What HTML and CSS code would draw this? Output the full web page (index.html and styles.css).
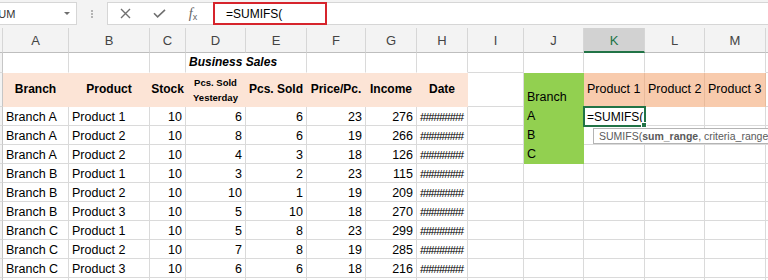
FILE: index.html
```html
<!DOCTYPE html>
<html>

<head>
    <meta charset="UTF-8">
    <meta name="viewport" content="width=device-width, initial-scale=1.0">
    <title>Business Sales - SUMIFS</title>
    <link rel="stylesheet" href="styles.css">
</head>

<body>
    <div class="toolbar">
        <div class="namebox">
            <span>SUM</span>
            <span class="namebox__arrow"></span>
        </div>
        <div class="toolbar__grip"></div>
        <div class="formula">
            <span class="formula__icon">
                <svg width="11" height="11" viewBox="0 0 11 11">
                    <path d="M1 1 L10 10 M10 1 L1 10" stroke="#707070" stroke-width="1.4" fill="none" />
                </svg>
            </span>
            <span class="formula__icon">
                <svg width="13" height="9" viewBox="0 0 13 9">
                    <path d="M1 4.2 L4.6 7.8 L12 0.8" stroke="#707070" stroke-width="1.6" fill="none" />
                </svg>
            </span>
            <span class="formula__icon formula__icon--fx"><i>f</i><span class="formula__x">x</span></span>
            <div class="formula__input">=SUMIFS(</div>
        </div>
    </div>

    <table class="sheet">
        <colgroup>
            <col class="w-rh">
            <col class="w-66">
            <col class="w-81">
            <col class="w-36">
            <col class="w-60">
            <col class="w-61">
            <col class="w-59">
            <col class="w-51">
            <col class="w-51">
            <col class="w-56">
            <col class="w-60">
            <col class="w-61">
            <col class="w-60">
            <col class="w-61">
            <col class="w-40">
        </colgroup>
        <tr class="letters">
            <th class="rh"></th>
            <th>A</th>
            <th>B</th>
            <th>C</th>
            <th>D</th>
            <th>E</th>
            <th>F</th>
            <th>G</th>
            <th>H</th>
            <th>I</th>
            <th>J</th>
            <th class="letters__active">K</th>
            <th>L</th>
            <th>M</th>
            <th></th>
        </tr>
        <tr class="row-title">
            <td class="rh"></td>
            <td class="above-fill"></td>
            <td class="above-fill"></td>
            <td class="above-fill"></td>
            <td class="above-fill cell--title">Business Sales</td>
            <td class="above-fill"></td>
            <td class="above-fill"></td>
            <td class="above-fill"></td>
            <td class="above-fill"></td>
            <td></td>
            <td class="above-fill"></td>
            <td class="above-fill"></td>
            <td class="above-fill"></td>
            <td class="above-fill"></td>
            <td></td>
        </tr>
        <tr class="row-head">
            <td class="rh"></td>
            <td class="cell--head">Branch</td>
            <td class="cell--head">Product</td>
            <td class="cell--head">Stock</td>
            <td class="cell--head cell--small">Pcs. Sold<br>Yesterday</td>
            <td class="cell--head">Pcs. Sold</td>
            <td class="cell--head">Price/Pc.</td>
            <td class="cell--head">Income</td>
            <td class="cell--head">Date</td>
            <td></td>
            <td class="cell--green">Branch</td>
            <td class="cell--orange">Product 1</td>
            <td class="cell--orange">Product 2</td>
            <td class="cell--orange">Product 3</td>
            <td></td>
        </tr>
        <tr>
            <td class="rh"></td>
            <td>Branch A</td>
            <td>Product 1</td>
            <td class="num">10</td>
            <td class="num">6</td>
            <td class="num">6</td>
            <td class="num">23</td>
            <td class="num">276</td>
            <td class="hash">########</td>
            <td></td>
            <td class="cell--green">A</td>
            <td class="cell--active">=SUMIFS(<span class="caret"></span>
                <span class="handle"></span>
                <div class="tip">SUMIFS(<b>sum_range</b>, criteria_range1, criteria1, ...)</div>
            </td>
            <td></td>
            <td></td>
            <td></td>
        </tr>
        <tr>
            <td class="rh"></td>
            <td>Branch A</td>
            <td>Product 2</td>
            <td class="num">10</td>
            <td class="num">8</td>
            <td class="num">6</td>
            <td class="num">19</td>
            <td class="num">266</td>
            <td class="hash">########</td>
            <td></td>
            <td class="cell--green">B</td>
            <td></td>
            <td></td>
            <td></td>
            <td></td>
        </tr>
        <tr>
            <td class="rh"></td>
            <td>Branch A</td>
            <td>Product 2</td>
            <td class="num">10</td>
            <td class="num">4</td>
            <td class="num">3</td>
            <td class="num">18</td>
            <td class="num">126</td>
            <td class="hash">########</td>
            <td></td>
            <td class="cell--green">C</td>
            <td></td>
            <td></td>
            <td></td>
            <td></td>
        </tr>
        <tr>
            <td class="rh"></td>
            <td>Branch B</td>
            <td>Product 1</td>
            <td class="num">10</td>
            <td class="num">3</td>
            <td class="num">2</td>
            <td class="num">23</td>
            <td class="num">115</td>
            <td class="hash">########</td>
            <td></td>
            <td></td>
            <td></td>
            <td></td>
            <td></td>
            <td></td>
        </tr>
        <tr>
            <td class="rh"></td>
            <td>Branch B</td>
            <td>Product 2</td>
            <td class="num">10</td>
            <td class="num">10</td>
            <td class="num">1</td>
            <td class="num">19</td>
            <td class="num">209</td>
            <td class="hash">########</td>
            <td></td>
            <td></td>
            <td></td>
            <td></td>
            <td></td>
            <td></td>
        </tr>
        <tr>
            <td class="rh"></td>
            <td>Branch B</td>
            <td>Product 3</td>
            <td class="num">10</td>
            <td class="num">5</td>
            <td class="num">10</td>
            <td class="num">18</td>
            <td class="num">270</td>
            <td class="hash">########</td>
            <td></td>
            <td></td>
            <td></td>
            <td></td>
            <td></td>
            <td></td>
        </tr>
        <tr>
            <td class="rh"></td>
            <td>Branch C</td>
            <td>Product 1</td>
            <td class="num">10</td>
            <td class="num">5</td>
            <td class="num">8</td>
            <td class="num">23</td>
            <td class="num">299</td>
            <td class="hash">########</td>
            <td></td>
            <td></td>
            <td></td>
            <td></td>
            <td></td>
            <td></td>
        </tr>
        <tr>
            <td class="rh"></td>
            <td>Branch C</td>
            <td>Product 2</td>
            <td class="num">10</td>
            <td class="num">7</td>
            <td class="num">8</td>
            <td class="num">19</td>
            <td class="num">285</td>
            <td class="hash">########</td>
            <td></td>
            <td></td>
            <td></td>
            <td></td>
            <td></td>
            <td></td>
        </tr>
        <tr>
            <td class="rh"></td>
            <td>Branch C</td>
            <td>Product 3</td>
            <td class="num">10</td>
            <td class="num">6</td>
            <td class="num">6</td>
            <td class="num">18</td>
            <td class="num">216</td>
            <td class="hash">########</td>
            <td></td>
            <td></td>
            <td></td>
            <td></td>
            <td></td>
            <td></td>
        </tr>
        <tr>
            <td class="rh"></td>
            <td></td>
            <td></td>
            <td></td>
            <td></td>
            <td></td>
            <td></td>
            <td></td>
            <td></td>
            <td></td>
            <td></td>
            <td></td>
            <td></td>
            <td></td>
            <td></td>
        </tr>
    </table>
</body>

</html>
```

FILE: styles.css
```css
*,
*::before,
*::after {
    box-sizing: border-box;
    margin: 0;
    padding: 0;
}

body {
    width: 768px;
    height: 280px;
    overflow: hidden;
    background-color: white;
    font-family: "Liberation Sans", Arial, sans-serif;
    color: black;
}

/* formula bar */

.toolbar {
    display: flex;
    align-items: flex-start;
    height: 28px;
    padding-top: 2px;
    background-color: rgb(243, 243, 243);
}

.namebox {
    display: flex;
    align-items: center;
    justify-content: space-between;
    width: 91px;
    height: 23px;
    margin-left: -14px;
    padding: 0 6px 0 4px;
    background-color: white;
    border: 1px solid rgb(214, 214, 214);
    font-size: 11px;
    color: rgb(51, 51, 51);
}

.namebox__arrow {
    width: 0;
    height: 0;
    border-left: 3px solid transparent;
    border-right: 3px solid transparent;
    border-top: 3px solid rgb(110, 110, 110);
}

.toolbar__grip {
    width: 2px;
    height: 8px;
    margin: 8px 14px 0 14px;
    border-left: 2px dotted rgb(180, 180, 180);
}

.formula {
    flex: 1;
    display: flex;
    align-items: center;
    gap: 14px;
    height: 23px;
    padding-left: 7px;
    background-color: white;
    border: 1px solid rgb(214, 214, 214);
    border-right: none;
}

.formula__icon {
    display: flex;
    align-items: center;
    justify-content: center;
    width: 20px;
    height: 21px;
}

.formula__icon--fx {
    font-family: "Liberation Serif", serif;
    font-size: 14px;
    color: rgb(100, 100, 100);
}

.formula__x {
    font-family: "Liberation Sans", sans-serif;
    font-size: 9px;
    margin-top: 6px;
}

.formula__input {
    display: flex;
    align-items: center;
    align-self: stretch;
    width: 114px;
    margin: -1px 0 -1px -4px;
    padding-left: 11px;
    border: 2px solid rgb(214, 36, 44);
    font-size: 12px;
}

/* sheet */

.sheet {
    width: 806px;
    table-layout: fixed;
    border-collapse: separate;
    border-spacing: 0;
}

.w-rh { width: 3px; }
.w-36 { width: 36px; }
.w-40 { width: 40px; }
.w-51 { width: 51px; }
.w-56 { width: 56px; }
.w-59 { width: 59px; }
.w-60 { width: 60px; }
.w-61 { width: 61px; }
.w-66 { width: 66px; }
.w-81 { width: 81px; }

.sheet tr {
    height: 19px;
}

.sheet td,
.sheet th {
    padding: 0 3px;
    border-right: 1px solid rgb(218, 218, 218);
    border-bottom: 1px solid rgb(218, 218, 218);
    font-size: 12.5px;
    font-weight: normal;
    line-height: 15px;
    text-align: left;
    vertical-align: bottom;
    white-space: nowrap;
    overflow: hidden;
}

.sheet .rh {
    padding: 0;
    background-color: rgb(243, 243, 243);
    border-right: 1px solid rgb(198, 198, 198);
}

.sheet .letters {
    height: 25px;
}

.sheet .letters th {
    padding-bottom: 4px;
    background-color: rgb(243, 243, 243);
    border-right: 1px solid rgb(214, 214, 214);
    border-bottom: 1px solid rgb(190, 190, 190);
    color: rgb(68, 68, 68);
    font-size: 13px;
    text-align: center;
}

.sheet .letters .letters__active {
    padding-bottom: 3px;
    background-color: rgb(210, 210, 210);
    border-bottom: 2px solid rgb(33, 115, 70);
    color: rgb(33, 115, 70);
}

.sheet .row-title {
    height: 20px;
}

.sheet .above-fill {
    border-bottom-color: transparent;
}

.sheet .cell--title {
    padding-bottom: 2px;
    overflow: visible;
    border-right-color: transparent;
    font-size: 12px;
    font-weight: bold;
    font-style: italic;
}

.sheet .row-head {
    height: 34px;
}

.sheet .cell--head {
    padding: 0;
    background-color: rgb(252, 228, 214);
    border-color: rgb(252, 228, 214);
    font-size: 12px;
    font-weight: bold;
    text-align: center;
    vertical-align: middle;
}

.sheet .cell--small {
    font-size: 9.5px;
    line-height: 15px;
}

.sheet .cell--green {
    padding-bottom: 1px;
    background-color: rgb(146, 208, 80);
    border-color: rgb(146, 208, 80);
}

.sheet .cell--orange {
    background-color: rgb(248, 203, 173);
    border-right-color: rgb(232, 186, 155);
    border-bottom-color: rgb(248, 203, 173);
    vertical-align: middle;
}

.sheet .num {
    text-align: right;
}

.sheet .hash {
    font-size: 11.5px;
    letter-spacing: -1px;
}

.sheet .cell--active {
    position: relative;
    overflow: visible;
    outline: 2px solid rgb(33, 115, 70);
    outline-offset: -1px;
    font-size: 12px;
}

.caret {
    display: inline-block;
    width: 1px;
    height: 14px;
    margin-left: 1px;
    background-color: black;
    vertical-align: -3px;
}

.handle {
    position: absolute;
    right: -3px;
    bottom: -3px;
    width: 6px;
    height: 6px;
    background-color: rgb(33, 115, 70);
    border: 1px solid white;
}

.tip {
    position: absolute;
    top: 21px;
    left: 9px;
    z-index: 2;
    height: 16px;
    padding: 0 5px;
    background-color: white;
    border: 1px solid rgb(180, 180, 180);
    color: rgb(90, 90, 90);
    font-size: 10.5px;
    line-height: 14px;
    white-space: nowrap;
}
```
